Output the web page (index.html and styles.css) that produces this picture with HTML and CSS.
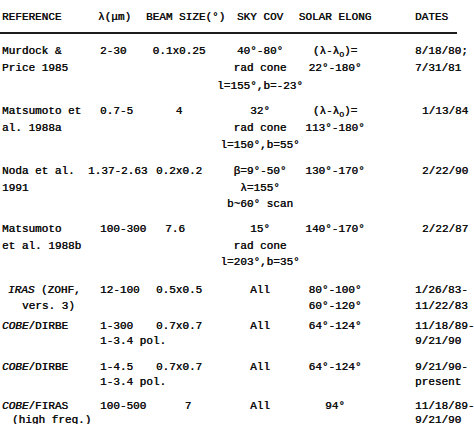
FILE: index.html
```html
<!DOCTYPE html>
<html>
<head>
<meta charset="utf-8">
<link rel="stylesheet" href="styles.css">
</head>
<body>
<div class="table">
  <div class="row head">
    <div class="c">REFERENCE</div>
    <div class="c lam">λ(μm)</div>
    <div class="c beamh">BEAM SIZE(°)</div>
    <div class="c ctr">SKY COV</div>
    <div class="c ctr">SOLAR ELONG</div>
    <div class="c date">DATES</div>
  </div>

  <div class="row r1">
    <div class="c"><span>Murdock &amp;</span><span>Price 1985</span></div>
    <div class="c lam"><span>2-30</span></div>
    <div class="c ctr"><span>0.1x0.25</span></div>
    <div class="c ctr sky"><span>40°-80°</span><span>rad cone</span><span>l=155°,b=-23°</span></div>
    <div class="c ctr"><span>(λ-λ<sub>O</sub>)=</span><span>22°-180°</span></div>
    <div class="c date"><span>8/18/80;</span><span>7/31/81</span></div>
  </div>

  <div class="row r2">
    <div class="c"><span>Matsumoto et</span><span>al. 1988a</span></div>
    <div class="c lam"><span>0.7-5</span></div>
    <div class="c ctr"><span>4</span></div>
    <div class="c ctr sky"><span>32°</span><span>rad cone</span><span>l=150°,b=55°</span></div>
    <div class="c ctr"><span>(λ-λ<sub>O</sub>)=</span><span>113°-180°</span></div>
    <div class="c date"><span class="din">1/13/84</span></div>
  </div>

  <div class="row r3">
    <div class="c"><span>Noda et al.</span><span>1991</span></div>
    <div class="c lam"><span class="wide">1.37-2.63</span></div>
    <div class="c ctr"><span>0.2x0.2</span></div>
    <div class="c ctr sky"><span>β=9°-50°</span><span>λ=155°</span><span>b~60° scan</span></div>
    <div class="c ctr"><span>130°-170°</span></div>
    <div class="c date"><span class="din">2/22/90</span></div>
  </div>

  <div class="row r4">
    <div class="c"><span>Matsumoto</span><span>et al. 1988b</span></div>
    <div class="c lam"><span>100-300</span></div>
    <div class="c ctr"><span class="left4">7.6</span></div>
    <div class="c ctr sky"><span>15°</span><span>rad cone</span><span>l=203°,b=35°</span></div>
    <div class="c ctr"><span>140°-170°</span></div>
    <div class="c date"><span class="din">2/22/87</span></div>
  </div>

  <div class="row r5">
    <div class="c"><span class="in1"><i>IRAS</i> (ZOHF,</span><span class="in2">vers. 3)</span></div>
    <div class="c lam"><span>12-100</span></div>
    <div class="c ctr"><span>0.5x0.5</span></div>
    <div class="c ctr sky"><span>All</span></div>
    <div class="c ctr"><span>80°-100°</span><span>60°-120°</span></div>
    <div class="c date"><span>1/26/83-</span><span>11/22/83</span></div>
  </div>

  <div class="row r6">
    <div class="c"><span><i>COBE</i>/DIRBE</span></div>
    <div class="c lam"><span>1-300</span><span>1-3.4 pol.</span></div>
    <div class="c ctr"><span>0.7x0.7</span></div>
    <div class="c ctr sky"><span>All</span></div>
    <div class="c ctr"><span>64°-124°</span></div>
    <div class="c date"><span>11/18/89-</span><span>9/21/90</span></div>
  </div>

  <div class="row r7">
    <div class="c"><span><i>COBE</i>/DIRBE</span></div>
    <div class="c lam"><span>1-4.5</span><span>1-3.4 pol.</span></div>
    <div class="c ctr"><span>0.7x0.7</span></div>
    <div class="c ctr sky"><span>All</span></div>
    <div class="c ctr"><span>64°-124°</span></div>
    <div class="c date"><span>9/21/90-</span><span>present</span></div>
  </div>

  <div class="row r8">
    <div class="c"><span><i>COBE</i>/FIRAS</span><span class="in3">(high freq.)</span></div>
    <div class="c lam"><span>100-500</span></div>
    <div class="c ctr"><span class="right8">7</span></div>
    <div class="c ctr sky"><span>All</span></div>
    <div class="c ctr"><span>94°</span></div>
    <div class="c date"><span>11/18/89-</span><span>9/21/90</span></div>
  </div>
</div>
</body>
</html>
```

FILE: styles.css
```css
html, body {
  margin: 0;
  padding: 0;
  background: #ffffff;
}

body {
  width: 474px;
  height: 424px;
  overflow: hidden;
  font-family: "Liberation Mono", "Courier New", monospace;
  font-size: 11px;
  color: #0e0e0e;
  text-shadow: 0.35px 0 0 #0e0e0e;
}

.table {
  padding-top: 9px;
}

.row {
  display: grid;
  grid-template-columns: 97px 46px 72px 90px 60px 1fr;
  line-height: 16px;
}

.head {
  width: 457px;
  padding-bottom: 7px;
  border-bottom: 2px solid #1c1c1c;
}

.c {
  display: flex;
  flex-direction: column;
  align-items: flex-start;
  white-space: nowrap;
  padding-left: 2px;
}

.c span {
  display: block;
}

.ctr {
  align-items: center;
  padding-left: 0;
}

.lam {
  padding-left: 3px;
}

.head .lam {
  padding-left: 1px;
}

.beamh {
  padding-left: 3px;
}

.wide {
  margin-left: -12px;
}

.left4 {
  margin-right: 8px;
}

.right8 {
  margin-left: 18px;
}

.date {
  padding-left: 50px;
}

.din {
  padding-left: 7px;
}

.in1 {
  padding-left: 6px;
}

.in2 {
  padding-left: 20px;
}

.in3 {
  padding-left: 10px;
}

i {
  font-style: italic;
}

sub {
  font-size: 8px;
  line-height: 0;
  vertical-align: -3px;
}

.r1 { line-height: 17.5px; padding-top: 8.5px; }
.r2 { line-height: 17px; padding-top: 8px; }
.r3 { line-height: 16.5px; padding-top: 9.25px; }
.r4 { line-height: 16.5px; padding-top: 8.5px; }
.r5 { line-height: 16px; padding-top: 10.75px; }
.r6 { line-height: 15px; padding-top: 5px; }
.r7 { line-height: 15px; padding-top: 11px; }
.r8 { line-height: 14px; padding-top: 9.5px; }
```
